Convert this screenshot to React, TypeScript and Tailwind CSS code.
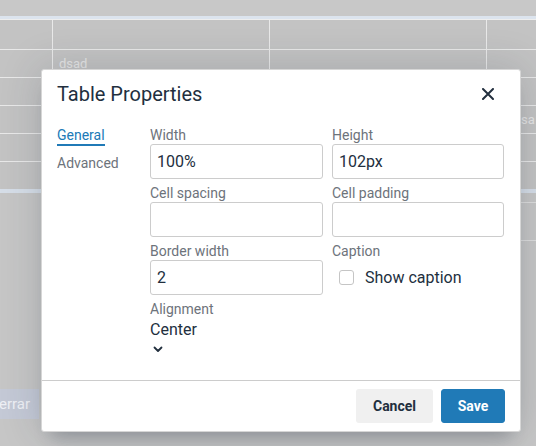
import React from "react";

const font = { fontFamily: "Roboto, 'Noto Sans', sans-serif" };

function Field({ label, value }: { label: string; value?: string }) {
  return (
    <div className="flex flex-col">
      <div className="text-[14px] leading-[18px] text-[#6d737b]">{label}</div>
      <div className="h-[35px] mt-0 border border-[#cccccc] rounded-[3px] px-[6px] flex items-center text-[16px] text-[#222f3e]">
        {value}
      </div>
    </div>
  );
}

function BgRow({ children }: { children?: React.ReactNode }) {
  return (
    <div className="flex h-[28px] border-t border-[#e9e9e9]">
      <div className="w-[53px] border-r border-[#e9e9e9]" />
      <div className="w-[217px] border-r border-[#e9e9e9] pl-[6px] text-[13px] leading-[28px] text-[#e6e6e6]">{children}</div>
      <div className="w-[217px] border-r border-[#e9e9e9]" />
      <div className="flex-1" />
    </div>
  );
}

export default function App() {
  return (
    <div className="relative w-[536px] h-[446px] overflow-hidden bg-[#c6c6c6]" style={font}>
      {/* background page */}
      <div className="h-[16px] bg-[#c8c8c8]" />
      <div className="h-[3px] bg-[#dce4ee]" />
      <div className="h-[1px] bg-[#eeeeee]" />
      <div className="bg-[#c3c3c3]">
        <div className="flex h-[29px]">
          <div className="w-[53px] border-r border-[#e9e9e9]" />
          <div className="w-[217px] border-r border-[#e9e9e9]" />
          <div className="w-[217px] border-r border-[#e9e9e9]" />
          <div className="flex-1" />
        </div>
        <BgRow>dsad</BgRow>
        <BgRow />
        <div className="flex h-[28px] border-t border-[#e9e9e9]">
          <div className="flex-1" />
          <div className="w-[15px] text-[13px] leading-[28px] text-[#e6e6e6] overflow-hidden whitespace-nowrap">sa</div>
        </div>
        <BgRow />
        <BgRow />
      </div>
      <div className="h-[4px] bg-[#d6dee8]" />
      <div className="h-[9px]" />
      <div className="flex justify-end">
        <div className="w-[16px] h-[39px] border-t border-b border-[#dedede]" />
      </div>
      <div className="h-[148px]" />
      <div className="w-[39px] h-[30px] bg-[#c4c9d6] flex items-center overflow-hidden">
        <span className="text-[15px] text-[#eef0f5] whitespace-nowrap -ml-[1px]">errar</span>
      </div>

      {/* dialog */}
      <div className="absolute left-[41px] top-[69px] w-[480px] h-[363px] bg-white rounded-[3px] border border-[#d6d6d6] shadow-[0_16px_16px_-10px_rgba(34,47,62,0.25),0_0_40px_1px_rgba(34,47,62,0.18)] flex flex-col">
        <div className="flex items-start justify-between pl-[15px] pr-[26px] pt-[11px] h-[56px]">
          <div className="text-[20px] leading-[26px] text-[#222f3e]">Table Properties</div>
          <svg width="12" height="12" viewBox="0 0 12 12" className="mt-[7px]">
            <path d="M1 1 L11 11 M11 1 L1 11" stroke="#222f3e" strokeWidth="2" strokeLinecap="round" />
          </svg>
        </div>
        <div className="flex flex-1 pl-[15px]">
          <div className="w-[93px] flex flex-col gap-[8px]">
            <div className="self-start text-[14px] leading-[18px] text-[#207ab7] border-b-2 border-[#207ab7]">General</div>
            <div className="text-[14px] leading-[18px] text-[#6d737b]">Advanced</div>
          </div>
          <div className="w-[354px] grid grid-cols-[173px_172px] gap-x-[9px] gap-y-[5px] content-start">
            <Field label="Width" value="100%" />
            <Field label="Height" value="102px" />
            <Field label="Cell spacing" />
            <Field label="Cell padding" />
            <Field label="Border width" value="2" />
            <div className="flex flex-col">
              <div className="text-[14px] leading-[18px] text-[#6d737b]">Caption</div>
              <div className="h-[35px] flex items-center pl-[7px]">
                <div className="w-[15px] h-[15px] border border-[#c5c5c5] rounded-[3px]" />
                <span className="ml-[11px] text-[16px] text-[#222f3e]">Show caption</span>
              </div>
            </div>
            <div className="flex flex-col">
              <div className="text-[14px] leading-[18px] text-[#6d737b]">Alignment</div>
              <div className="text-[16px] leading-[24px] text-[#222f3e]">Center</div>
              <svg width="10" height="7" viewBox="0 0 10 7" className="ml-[3px] mt-[4px]">
                <path d="M1.5 1.5 L5 5 L8.5 1.5" stroke="#222f3e" strokeWidth="1.8" fill="none" strokeLinecap="round" strokeLinejoin="round" />
              </svg>
            </div>
          </div>
        </div>
        <div className="border-t border-[#cccccc] h-[51px] flex items-start justify-end gap-[8px] pr-[15px] pt-[8px]">
          <button className="w-[77px] h-[34px] rounded-[3px] bg-[#f0f0f0] text-[14px] font-bold text-[#222f3e]">Cancel</button>
          <button className="w-[64px] h-[34px] rounded-[3px] bg-[#207ab7] border border-[#207ab7] text-[14px] font-bold text-white">Save</button>
        </div>
      </div>
    </div>
  );
}
